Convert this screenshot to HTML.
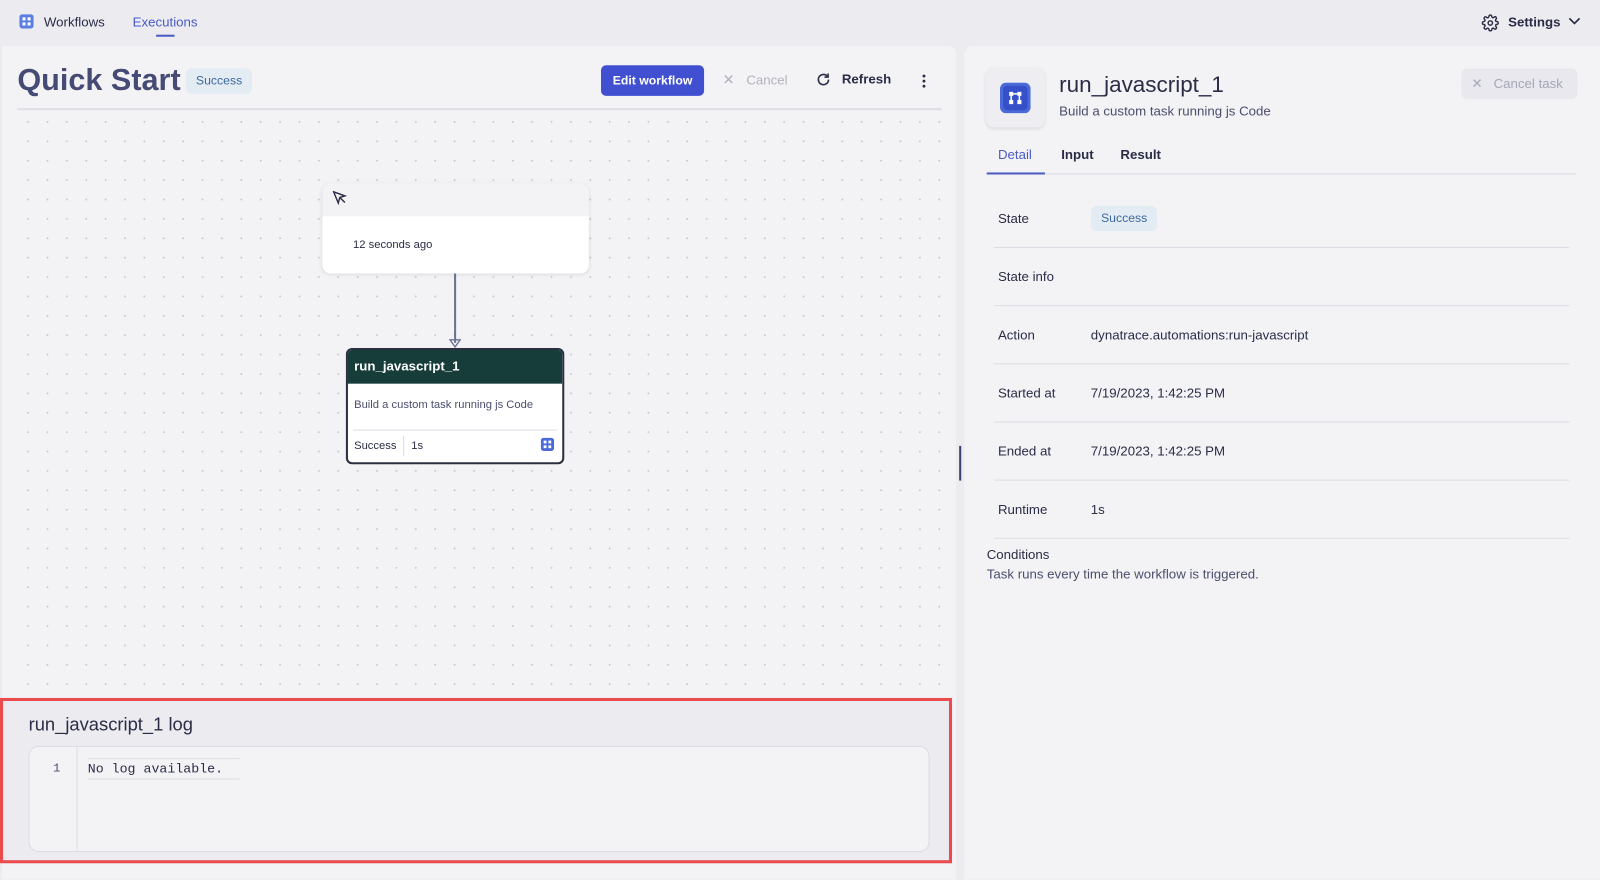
<!DOCTYPE html>
<html><head><meta charset="utf-8"><style>
*{box-sizing:border-box;margin:0;padding:0}
html,body{width:1600px;height:879px;overflow:hidden;background:#ebebf0}
#w{position:absolute;left:0;top:0;width:1568px;height:862px;transform:scale(1.0204);transform-origin:0 0;font-family:"Liberation Sans",sans-serif;color:#2a2d45}
.a{position:absolute}
.top{left:0;top:0;width:1568px;height:45px;background:#ebebf0}
.left{left:2px;top:45px;width:935px;height:817px;background:#f3f3f6;border-radius:0 8px 0 0}
.grid{left:18px;top:110px;width:910px;height:570px;background-image:radial-gradient(circle,#c4c5d0 0.8px,transparent 1.1px);background-size:19px 19px;background-position:0 0}
.right{left:945px;top:45px;width:623px;height:817px;background:#f3f3f6;border-radius:8px 0 0 0}
.badge{background:#e3ebf3;color:#3d6a9d;font-size:12px;border-radius:6px;padding:0 10px;height:25px;line-height:25px}
.row{left:974px;width:564px;height:57px;border-bottom:1px solid #dcdce4;font-size:13px}
.row .k{position:absolute;left:4px;top:50%;transform:translateY(-50%)}
.row .v{position:absolute;left:95px;top:50%;transform:translateY(-50%)}
</style></head><body><div id="w">
<div class="a top"></div>
<svg class="a" style="left:19px;top:14px" width="14" height="14" viewBox="0 0 14 14"><rect width="14" height="14" rx="3" fill="#5a7fe0"/><rect x="3" y="3" width="3" height="3" fill="#fff"/><rect x="8" y="3" width="3" height="3" fill="#fff"/><rect x="3" y="8" width="3" height="3" fill="#fff"/><rect x="8" y="8" width="3" height="3" fill="#fff"/></svg>
<div class="a" style="left:43px;top:14px;font-size:13px;color:#2a2d45">Workflows</div>
<div class="a" style="left:130px;top:14px;font-size:13px;color:#4a5bc4">Executions</div>
<div class="a" style="left:153px;top:34px;width:18px;height:2px;background:#4a5bc4"></div>
<svg class="a" style="left:1452px;top:14px" width="17" height="17" viewBox="0 0 24 24" fill="none" stroke="#2a2d45" stroke-width="2"><circle cx="12" cy="12" r="3"/><path d="M19.4 15a1.7 1.7 0 0 0 .3 1.8l.1.1a2 2 0 1 1-2.8 2.8l-.1-.1a1.7 1.7 0 0 0-1.8-.3 1.7 1.7 0 0 0-1 1.5V21a2 2 0 1 1-4 0v-.1a1.7 1.7 0 0 0-1.1-1.5 1.7 1.7 0 0 0-1.8.3l-.1.1a2 2 0 1 1-2.8-2.8l.1-.1a1.7 1.7 0 0 0 .3-1.8 1.7 1.7 0 0 0-1.5-1H3a2 2 0 1 1 0-4h.1a1.7 1.7 0 0 0 1.5-1.1 1.7 1.7 0 0 0-.3-1.8l-.1-.1a2 2 0 1 1 2.8-2.8l.1.1a1.7 1.7 0 0 0 1.8.3H9a1.7 1.7 0 0 0 1-1.5V3a2 2 0 1 1 4 0v.1a1.7 1.7 0 0 0 1 1.5 1.7 1.7 0 0 0 1.8-.3l.1-.1a2 2 0 1 1 2.8 2.8l-.1.1a1.7 1.7 0 0 0-.3 1.8V9a1.7 1.7 0 0 0 1.5 1H21a2 2 0 1 1 0 4h-.1a1.7 1.7 0 0 0-1.5 1z"/></svg>
<div class="a" style="left:1478px;top:14px;font-size:13px;font-weight:bold;color:#2a2d45">Settings</div>
<svg class="a" style="left:1537px;top:17px" width="12" height="8" viewBox="0 0 12 8"><path d="M1 1l5 5 5-5" fill="none" stroke="#2a2d45" stroke-width="1.6"/></svg>

<div class="a left"></div>
<div class="a grid"></div>
<div class="a" style="left:17px;top:62px;font-size:30px;font-weight:bold;color:#454b74">Quick Start</div>
<div class="a badge" style="left:182px;top:67px">Success</div>
<div class="a" style="left:589px;top:64px;width:101px;height:30px;background:#4150d0;border-radius:5px;color:#fff;font-size:12px;font-weight:bold;text-align:center;line-height:30px">Edit workflow</div>
<div class="a" style="left:708px;top:70px;font-size:14px;color:#b0b2c0">✕&nbsp;&nbsp;&nbsp;<span style="font-size:13px">Cancel</span></div>
<svg class="a" style="left:800px;top:71px" width="14" height="14" viewBox="0 0 14 14"><path d="M12 7a5 5 0 1 1-1.5-3.6" fill="none" stroke="#2a2d45" stroke-width="1.6"/><path d="M11.5 1v3.5H8" fill="none" stroke="#2a2d45" stroke-width="1.6"/></svg>
<div class="a" style="left:825px;top:70px;font-size:13px;font-weight:bold">Refresh</div>
<div class="a" style="left:904px;top:72px;width:3px;height:14px;background:radial-gradient(circle,#2a2d45 1.3px,transparent 1.6px);background-size:3px 5px"></div>
<div class="a" style="left:17px;top:106px;width:906px;height:2px;background:#dfdfe6"></div>

<div class="a" style="left:316px;top:180px;width:261px;height:88px;background:#fff;border-radius:8px;box-shadow:0 1px 4px rgba(0,0,0,.1);overflow:hidden"><div style="height:32px;background:#f3f3f6"></div></div>
<svg class="a" style="left:326px;top:187px" width="14" height="14" viewBox="0 0 14 14"><path d="M1 1l11 4-5 1.5L5.5 12z M7 6.5l5 5" fill="none" stroke="#2a2d45" stroke-width="1.4"/></svg>
<div class="a" style="left:346px;top:234px;font-size:11px">12 seconds ago</div>
<div class="a" style="left:445px;top:268px;width:2px;height:68px;background:#6c7290"></div>
<svg class="a" style="left:440px;top:332px" width="12" height="9"><path d="M1 1h10L6 8z" fill="none" stroke="#6c7290" stroke-width="1.3"/></svg>
<div class="a" style="left:339px;top:341px;width:214px;height:114px;border:2px solid #2a3040;border-radius:6px;background:#fff;overflow:hidden">
<div style="height:33px;background:#163d3a;color:#fff;font-size:13px;font-weight:bold;padding:8px 6px">run_javascript_1</div>
<div style="font-size:11px;color:#4b4f6b;padding:15px 6px 0">Build a custom task running js Code</div>
<div style="position:absolute;left:5px;right:5px;top:78px;border-top:1px solid #dcdce4"></div>
<div style="position:absolute;left:6px;top:88px;font-size:11px">Success</div>
<div style="position:absolute;left:54px;top:84px;width:1px;height:20px;background:#dcdce4"></div>
<div style="position:absolute;left:62px;top:88px;font-size:11px">1s</div>
<svg style="position:absolute;left:189px;top:86px" width="13" height="13" viewBox="0 0 14 14"><rect width="14" height="14" rx="3" fill="#4a6ad8"/><rect x="3" y="3" width="3" height="3" fill="#fff"/><rect x="8" y="3" width="3" height="3" fill="#fff"/><rect x="3" y="8" width="3" height="3" fill="#fff"/><rect x="8" y="8" width="3" height="3" fill="#fff"/></svg>
</div>

<div class="a" style="left:940px;top:437px;width:2px;height:34px;background:#3a4170"></div>

<div class="a" style="left:0;top:684px;width:933px;height:162px;border:3px solid #ea4b4f;background:#ebebf0"></div>
<div class="a" style="left:28px;top:700px;font-size:18px;color:#2a2d45">run_javascript_1 log</div>
<div class="a" style="left:28px;top:731px;width:883px;height:104px;border:1px solid #dcdce4;border-radius:10px;background:#f3f3f6;overflow:hidden"><div style="position:absolute;left:46px;top:0;bottom:0;width:1px;background:#dcdce4"></div></div>
<div class="a" style="left:52px;top:746px;font-size:12px;font-family:'Liberation Mono',monospace;color:#4b4f6b">1</div>
<div class="a" style="left:86px;top:743px;width:149px;height:21px;border-top:1px solid #dcdce4;border-bottom:1px solid #dcdce4;font-family:'Liberation Mono',monospace;font-size:13px;color:#2a2d45;padding-top:2px">No log available.</div>

<div class="a right"></div>
<div class="a" style="left:966px;top:67px;width:58px;height:58px;background:#eeeef2;border-radius:8px;box-shadow:0 1px 3px rgba(0,0,0,.1)"></div>
<svg class="a" style="left:980px;top:81px" width="30" height="30" viewBox="0 0 30 30"><rect width="30" height="30" rx="6" fill="#4a6ad8"/><rect x="3" y="3" width="24" height="24" rx="4" fill="#3550c8"/><path d="M9 9h4v4H9zM17 9h4v4h-4zM9 17h4v4H9zM17 17h4v4h-4z" fill="#fff"/><path d="M13 11h4M11 13v4M19 13v4" stroke="#fff" stroke-width="1.5"/></svg>
<div class="a" style="left:1038px;top:70px;font-size:22px;color:#2a2d45">run_javascript_1</div>
<div class="a" style="left:1038px;top:101px;font-size:13px;color:#4b4f6b">Build a custom task running js Code</div>
<div class="a" style="left:1432px;top:67px;width:114px;height:30px;background:#e8e8ee;border-radius:6px;color:#a4a7b7;font-size:13px;line-height:30px;padding-left:10px">✕&nbsp;&nbsp;&nbsp;Cancel task</div>
<div class="a" style="left:978px;top:144px;font-size:13px;color:#4a5bc4">Detail</div>
<div class="a" style="left:1040px;top:144px;font-size:13px;font-weight:bold;color:#2a2d45">Input</div>
<div class="a" style="left:1098px;top:144px;font-size:13px;font-weight:bold;color:#2a2d45">Result</div>
<div class="a" style="left:967px;top:170px;width:578px;height:1px;background:#d8d8e2"></div>
<div class="a" style="left:967px;top:169px;width:57px;height:2px;background:#4a5bc4"></div>

<div class="a row" style="top:186px"><span class="k">State</span><span class="v badge" style="display:inline-block;top:50%">Success</span></div>
<div class="a row" style="top:243px"><span class="k">State info</span></div>
<div class="a row" style="top:300px"><span class="k">Action</span><span class="v">dynatrace.automations:run-javascript</span></div>
<div class="a row" style="top:357px"><span class="k">Started at</span><span class="v">7/19/2023, 1:42:25 PM</span></div>
<div class="a row" style="top:414px"><span class="k">Ended at</span><span class="v">7/19/2023, 1:42:25 PM</span></div>
<div class="a row" style="top:471px"><span class="k">Runtime</span><span class="v">1s</span></div>
<div class="a" style="left:967px;top:536px;font-size:13px">Conditions</div>
<div class="a" style="left:967px;top:555px;font-size:13px;color:#4b4f6b">Task runs every time the workflow is triggered.</div>
</div></body></html>
